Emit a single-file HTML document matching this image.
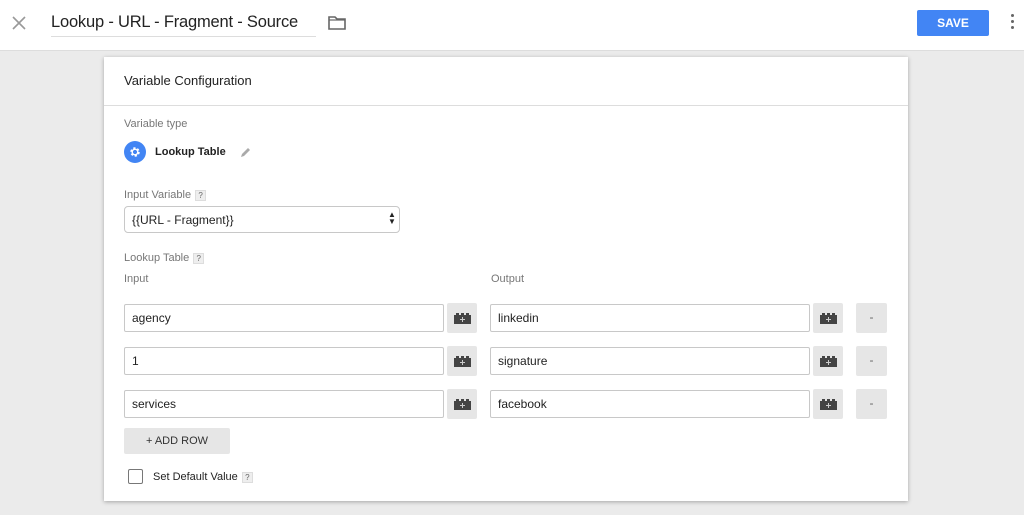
<!DOCTYPE html><html><head><style>
*{box-sizing:border-box;margin:0;padding:0}
body{width:1024px;height:515px;background:#ebebeb;font-family:"Liberation Sans",Roboto,sans-serif;position:relative;overflow:hidden;color:#222}
.a{position:absolute}
.top{left:0;top:0;width:1024px;height:51px;background:#fff;border-bottom:1px solid #ddd}
.card{left:104px;top:57px;width:804px;height:444px;background:#fff;box-shadow:0 1px 4px rgba(0,0,0,.3)}
.lbl{font-size:11px;color:#777}
.q{display:inline-block;width:11px;height:11px;background:#eee;border:1px solid #ddd;font-size:8px;text-align:center;line-height:10px;color:#666;vertical-align:middle;margin-left:4px}
.in{height:28px;border:1px solid #c8c8c8;border-radius:2px;font-size:12px;padding-left:7px;line-height:26px;color:#222}
.btn{width:30px;height:30px;background:#e6e6e6;border-radius:2px}
.btn svg{position:absolute;left:7px;top:9px}
.mn{width:31px;height:30px;background:#e6e6e6;border-radius:2px;text-align:center;line-height:29px;font-size:12px;color:#666}
</style></head><body>
<div class="a top"></div>
<svg class="a" style="left:12px;top:16px" width="14" height="14"><path d="M1 1L13 13M13 1L1 13" stroke="#999" stroke-width="1.6"/></svg>
<div class="a" style="left:51px;top:13px;font-size:16.5px;letter-spacing:-0.2px;white-space:nowrap;color:#222;border-bottom:1px solid #ddd;padding-bottom:4px;width:265px">Lookup - URL - Fragment - Source</div>
<svg class="a" style="left:328px;top:15px" width="18" height="15"><path d="M1 2h6l2 2h8v10H1z" fill="none" stroke="#666" stroke-width="1.6"/><path d="M1 5h16" stroke="#666" stroke-width="1.2"/></svg>
<div class="a" style="left:917px;top:10px;width:72px;height:26px;background:#4285f4;border-radius:2px;color:#fff;font-size:12px;font-weight:bold;text-align:center;line-height:26px">SAVE</div>
<div class="a" style="left:1011px;top:14px;width:3px;height:3px;background:#666;border-radius:50%;box-shadow:0 6px 0 #666,0 12px 0 #666"></div>
<div class="a card"></div>
<div class="a" style="left:124px;top:73px;font-size:13px;color:#222">Variable Configuration</div>
<div class="a" style="left:104px;top:105px;width:804px;height:1px;background:#ddd"></div>
<div class="a lbl" style="left:124px;top:118px">Variable type</div>
<div class="a" style="left:124px;top:141px;width:22px;height:22px;border-radius:50%;background:#4285f4"></div>
<svg class="a" style="left:129px;top:146px" width="12" height="12" viewBox="0 0 12 12"><circle cx="6" cy="6" r="3.5" fill="none" stroke="#fff" stroke-width="2.5" stroke-dasharray="2 1.7"/><circle cx="6" cy="6" r="2.8" fill="none" stroke="#fff" stroke-width="1.4"/></svg>
<div class="a" style="left:155px;top:146px;font-size:11px;font-weight:bold;color:#222">Lookup Table</div>
<svg class="a" style="left:240px;top:146px" width="12" height="12"><path d="M1 11l1-3 6-6 2 2-6 6z" fill="#aaa"/></svg>
<div class="a lbl" style="left:124px;top:189px">Input Variable<span class="q">?</span></div>
<div class="a in" style="left:124px;top:206px;width:276px;height:27px;border-radius:4px">{{URL - Fragment}}</div>
<div class="a" style="left:388px;top:211px;font-size:8px;line-height:7px;color:#222">▲<br>▼</div>
<div class="a lbl" style="left:124px;top:252px">Lookup Table<span class="q">?</span></div>
<div class="a lbl" style="left:124px;top:273px">Input</div>
<div class="a lbl" style="left:491px;top:273px">Output</div>
<div id="rows"></div>
<div class="a" style="left:124px;top:428px;width:106px;height:26px;background:#e6e6e6;border-radius:2px;text-align:center;line-height:26px;font-size:11px;color:#333">+ ADD ROW</div>
<div class="a" style="left:128px;top:469px;width:15px;height:15px;border:1.5px solid #777;border-radius:2px"></div>
<div class="a" style="left:153px;top:471px;font-size:11px;color:#222">Set Default Value<span class="q">?</span></div>
<script>
var d=[["agency","linkedin"],["1","signature"],["services","facebook"]],h="";
var ic='<svg width="17" height="12" viewBox="0 0 17 12"><path d="M0 3h2V1h3v2h2V1h3v2h2V1h3v2h2v9H0z" fill="#444"/><path d="M8.5 5v5M6 7.5h5" stroke="#ccc" stroke-width="1"/></svg>';
d.forEach(function(r,i){var y=304+i*43;
h+='<div class="a in" style="left:124px;top:'+y+'px;width:320px">'+r[0]+'</div>';
h+='<div class="a btn" style="left:447px;top:'+(y-1)+'px">'+ic+'</div>';
h+='<div class="a in" style="left:490px;top:'+y+'px;width:320px">'+r[1]+'</div>';
h+='<div class="a btn" style="left:813px;top:'+(y-1)+'px">'+ic+'</div>';
h+='<div class="a mn" style="left:856px;top:'+(y-1)+'px">-</div>';});
document.getElementById("rows").innerHTML=h;
</script>
</body></html>
